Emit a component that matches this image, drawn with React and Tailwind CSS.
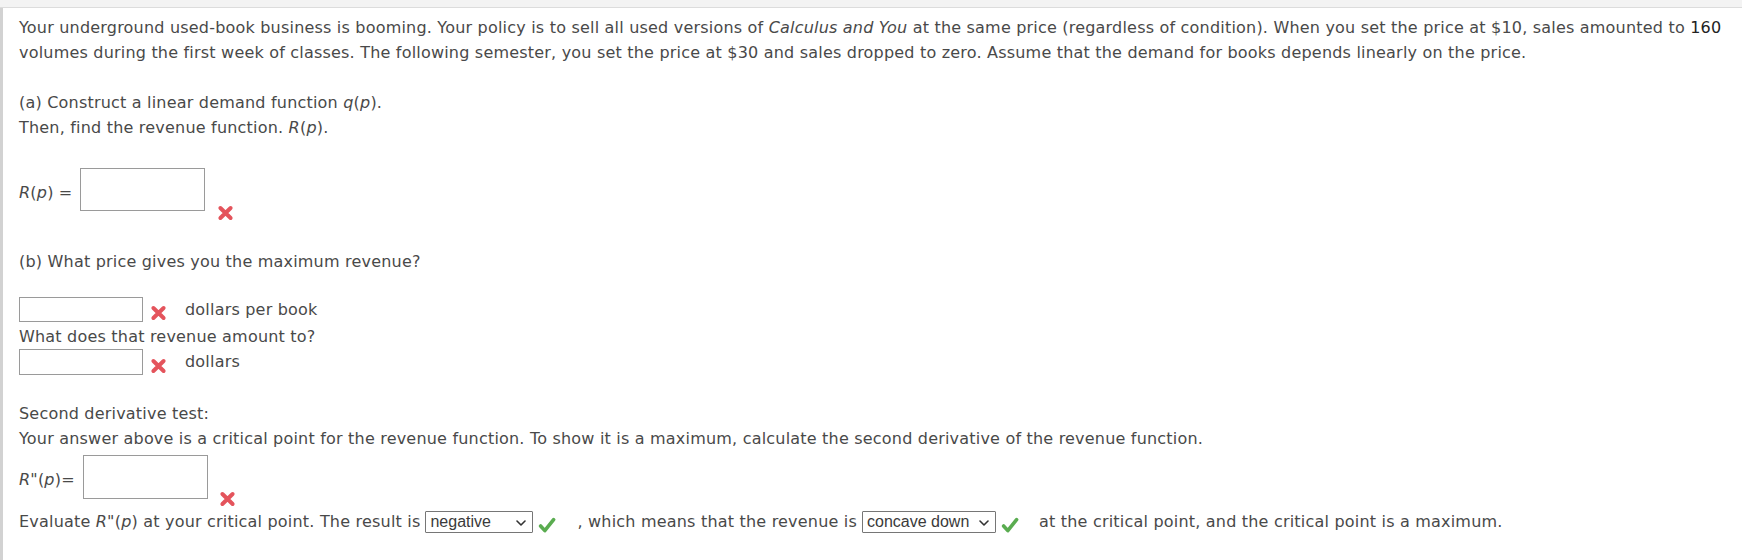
import React from 'react';

// Red "incorrect" mark used next to the answer boxes
function WrongMark({ className = '' }) {
  return (
    <svg viewBox="0 0 17 16" className={`w-[17px] h-[16px] shrink-0 ${className}`}>
      <path d="M3.4 3 L13.6 13 M13.6 3 L3.4 13" stroke="#e4545c" strokeWidth="4" strokeLinecap="round" fill="none" />
    </svg>
  );
}

// Green "correct" mark used next to the dropdowns
function RightMark({ className = '' }) {
  return (
    <svg viewBox="0 0 18 18" className={`w-[18px] h-[18px] shrink-0 ${className}`}>
      <path d="M2.6 10 L6.8 14.6 L15.6 3.6" stroke="#5aac50" strokeWidth="3.6" strokeLinecap="round" strokeLinejoin="round" fill="none" />
    </svg>
  );
}

function AnswerBox({ className = '' }) {
  return <div className={`shrink-0 bg-white border border-[#9a9a9a] ${className}`} />;
}

function Dropdown({ value, width }) {
  return (
    <div
      className={`relative shrink-0 h-[22px] bg-white border border-[#767676] rounded-[1px] font-['Liberation_Sans',Arial,sans-serif] text-[16px] leading-[20px] tracking-normal text-[#3a3a3a] pl-[4px] ${width}`}
    >
      {value}
      <svg viewBox="0 0 10 6" className="absolute right-[6px] top-[8px] w-[10px] h-[6px]">
        <path d="M1 1 L5 5 L9 1" stroke="#333" strokeWidth="1.6" fill="none" strokeLinecap="round" strokeLinejoin="round" />
      </svg>
    </div>
  );
}

export default function App() {
  return (
    <div className="w-[1742px] h-[560px] overflow-hidden bg-white font-['DejaVu_Sans',Verdana,sans-serif] text-[16px] leading-[25.3px] tracking-[0.2px] text-[#494949]">
      <div className="h-[8px] bg-[#f3f3f3] border-b border-[#dcdcdc]" />
      <div className="h-[552px] border-l-[3px] border-[#d2d2d2] pl-[16px] pr-[8px] pt-[7px]">
        <p>
          Your underground used-book business is booming. Your policy is to sell all used versions of{' '}
          <i>Calculus and You</i> at the same price (regardless of condition). When you set the price at $10, sales
          amounted to <span className="text-[#222]">160</span> volumes during the first week of classes. The following
          semester, you set the price at $30 and sales dropped to zero. Assume that the demand for books depends
          linearly on the price.
        </p>

        <p className="mt-[24.5px]">
          (a) Construct a linear demand function <i>q</i>(<i>p</i>).
        </p>
        <p>
          Then, find the revenue function. <i>R</i>(<i>p</i>).
        </p>

        <div className="flex items-start mt-[27px]">
          <span className="pt-[12px]">
            <i>R</i>(<i>p</i>) =
          </span>
          <AnswerBox className="ml-[8px] w-[125px] h-[43px]" />
          <WrongMark className="ml-[12px] mt-[37px]" />
        </div>

        <p className="mt-[28px]">(b) What price gives you the maximum revenue?</p>

        <div className="flex items-start mt-[23.5px]">
          <AnswerBox className="w-[124px] h-[25px]" />
          <WrongMark className="ml-[7px] mt-[8px]" />
          <span className="ml-[18px]">dollars per book</span>
        </div>
        <p className="mt-[1px]">What does that revenue amount to?</p>
        <div className="flex items-start">
          <AnswerBox className="w-[124px] h-[26px]" />
          <WrongMark className="ml-[7px] mt-[9px]" />
          <span className="ml-[18px]">dollars</span>
        </div>

        <p className="mt-[25.5px]">Second derivative test:</p>
        <p>
          Your answer above is a critical point for the revenue function. To show it is a maximum, calculate the second
          derivative of the revenue function.
        </p>

        <div className="flex items-start mt-[4px]">
          <span className="pt-[12px]">
            <i>R</i>"(<i>p</i>)=
          </span>
          <AnswerBox className="ml-[8px] w-[125px] h-[44px]" />
          <WrongMark className="ml-[11px] mt-[36px]" />
        </div>

        <div className="flex items-center mt-[2px] whitespace-nowrap">
          <span>
            Evaluate <i>R</i>"(<i>p</i>) at your critical point. The result is
          </span>
          <span className="ml-[5px]">
            <Dropdown value="negative" width="w-[108px]" />
          </span>
          <RightMark className="ml-[5px] translate-y-[3px]" />
          <span className="ml-[21px]">, which means that the revenue is</span>
          <span className="ml-[5px]">
            <Dropdown value="concave down" width="w-[134px]" />
          </span>
          <RightMark className="ml-[5px] translate-y-[3px]" />
          <span className="ml-[20px]">at the critical point, and the critical point is a maximum.</span>
        </div>
      </div>
    </div>
  );
}
